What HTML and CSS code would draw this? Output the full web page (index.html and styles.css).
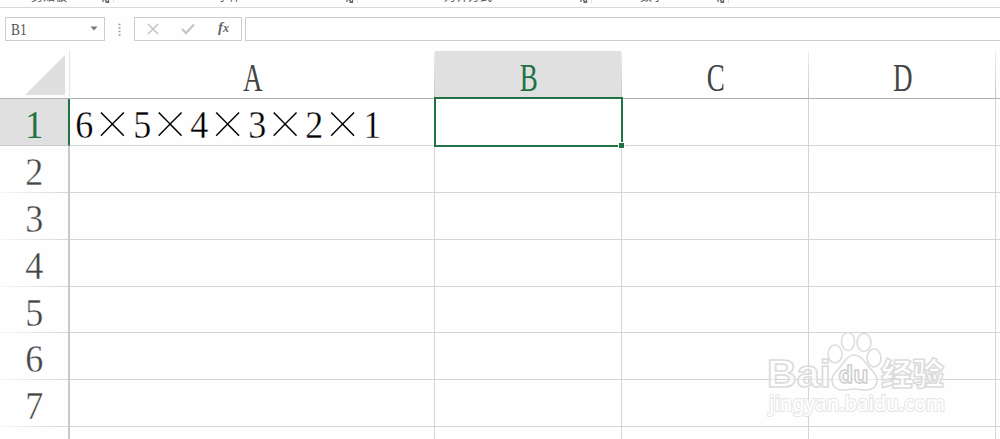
FILE: index.html
```html
<!DOCTYPE html>
<html lang="zh-CN">
<head>
<meta charset="utf-8">
<title>Excel</title>
<link rel="stylesheet" href="styles.css">
</head>
<body>
<div class="window">
  <div class="ribbon">
    <div class="group g1"><span>剪贴板</span><svg class="launcher" width="8" height="4"><path d="M1 0v2M3 0l3 2.400M6.500 0v2.500H3.500"/></svg></div>
    <div class="group g2"><span>字体</span><svg class="launcher" width="8" height="4"><path d="M1 0v2M3 0l3 2.400M6.500 0v2.500H3.500"/></svg></div>
    <div class="group g3"><span>对齐方式</span><svg class="launcher" width="8" height="4"><path d="M1 0v2M3 0l3 2.400M6.500 0v2.500H3.500"/></svg></div>
    <div class="group g4"><span>数字</span><svg class="launcher" width="8" height="4"><path d="M1 0v2M3 0l3 2.400M6.500 0v2.500H3.500"/></svg></div>
  </div>
  <div class="formula-bar">
    <div class="name-box"><span>B1</span><svg width="8" height="5"><path d="M.5 .5h7L4 4.500z" fill="#777"/></svg></div>
    <svg class="dots" width="3" height="14"><path d="M.5 1.500h2M.5 5h2M.5 8.500h2M.5 12h2" stroke="#999" stroke-width="1.300"/></svg>
    <div class="buttons">
      <svg width="12" height="12"><path d="M1 1l10 10M11 1l-10 10" stroke="#c6c6c6" stroke-width="1.700"/></svg>
      <svg width="14" height="12"><path d="M1 6l4 4 8-8.500" fill="none" stroke="#c6c6c6" stroke-width="2.400"/></svg>
      <span class="fx">f<small>x</small></span>
    </div>
    <div class="formula"></div>
  </div>
  <div class="sheet">
    <div class="corner"><svg width="40" height="40"><path d="M40 0v40H0z" fill="#dfdfdf"/></svg></div>
    <div class="col"><span>A</span></div><div class="col active"><span>B</span></div><div class="col"><span>C</span></div><div class="col"><span>D</span></div><div class="col"></div>
    <div class="row active"><span>1</span></div><div class="cell value"><span class="n">6</span><span class="x">×</span><span class="n">5</span><span class="x">×</span><span class="n">4</span><span class="x">×</span><span class="n">3</span><span class="x">×</span><span class="n">2</span><span class="x">×</span><span class="n">1</span></div><div class="cell selected"><i class="selection"></i><i class="handle"></i></div><div class="cell"></div><div class="cell"></div><div class="cell"></div>
    <div class="row"><span>2</span></div><div class="cell"></div><div class="cell"></div><div class="cell"></div><div class="cell"></div><div class="cell"></div>
    <div class="row"><span>3</span></div><div class="cell"></div><div class="cell"></div><div class="cell"></div><div class="cell"></div><div class="cell"></div>
    <div class="row"><span>4</span></div><div class="cell"></div><div class="cell"></div><div class="cell"></div><div class="cell"></div><div class="cell"></div>
    <div class="row"><span>5</span></div><div class="cell"></div><div class="cell"></div><div class="cell"></div><div class="cell"></div><div class="cell"></div>
    <div class="row"><span>6</span></div><div class="cell"></div><div class="cell"></div><div class="cell"></div><div class="cell"></div><div class="cell"></div>
    <div class="row"><span>7</span></div><div class="cell"></div><div class="cell"></div><div class="cell"></div><div class="cell"></div><div class="cell"></div>
    <div class="row"></div><div class="cell"></div><div class="cell"></div><div class="cell"></div><div class="cell"></div><div class="cell"></div>
  </div>
  <svg class="watermark" width="190" height="95" viewBox="0 0 190 95">
    <g class="mark">
      <text class="brand" x="4" y="57" font-size="39" textLength="64" lengthAdjust="spacingAndGlyphs">Bai</text>
      <text class="brand cjk" x="118" y="54.500" font-size="31" textLength="63" lengthAdjust="spacingAndGlyphs">经验</text>
      <ellipse cx="72" cy="24" rx="7" ry="9"/>
      <ellipse cx="85" cy="11.500" rx="6.500" ry="9"/>
      <ellipse cx="101" cy="12.500" rx="7" ry="9"/>
      <ellipse cx="111" cy="28" rx="7" ry="9"/>
      <path d="M91 25c7 0 10 6 14 11 4 5 9 8 9 14 0 7-5 10-11 10-5 0-8-1-12-1s-7 1-12 1c-6 0-10-4-10-10s5-9 9-14c4-5 7-11 13-11z"/>
      <text class="du" x="75.500" y="53" font-size="24" textLength="30" lengthAdjust="spacingAndGlyphs">du</text>
    </g>
    <text class="site" x="6" y="81" font-size="21" textLength="176" lengthAdjust="spacingAndGlyphs">jingyan.baidu.com</text>
  </svg>
</div>
</body>
</html>
```
FILE: styles.css
```css
* { box-sizing: border-box; }
body { margin: 0; background: #fefefe; }
.window { position: relative; width: 1000px; height: 439px; overflow: hidden; }

.ribbon { display: grid; grid-template-columns: 114px 244px 234px 137px; height: 8px; overflow: hidden; border-bottom: 1px solid #d9d9d9; }
.group { display: flex; align-items: flex-start; justify-content: space-between; height: 3px; overflow: hidden; border-right: 1px solid #e4e4e4; padding-right: 3px; font: 12px/14px "Noto Sans CJK SC", sans-serif; color: #555; }
.group span { margin-top: -11px; }
.g1 { padding-left: 31px; }
.g2 { padding-left: 103px; }
.g3 { padding-left: 86px; }
.g4 { padding-left: 48px; }
.launcher path { fill: none; stroke: #666; stroke-width: 1.3; }

.formula-bar { display: flex; height: 43px; padding: 9px 0 9px 5px; }
.name-box { display: flex; align-items: center; justify-content: space-between; width: 100px; height: 24px; padding: 0 6px 0 5px; border: 1px solid #cdcdcd; font: 16px "Liberation Serif", serif; color: #555; }
.name-box span { transform: scaleX(.84); transform-origin: left; padding-top: 2px; }
.name-box svg { margin-top: -1px; }
.dots { margin: 6px 13px 0 13px; }
.buttons { display: flex; align-items: center; width: 108px; height: 24px; padding-left: 12px; gap: 22px; border: 1px solid #cdcdcd; }
.fx { font: italic bold 15px/20px "Liberation Serif", serif; color: #666; margin-top: -3px; margin-left: 1px; }
.fx small { font-size: 12px; }
.formula { flex: 1; margin-left: 3px; height: 24px; border: 1px solid #cdcdcd; border-right: 0; }

.sheet { display: grid; grid-template-columns: 70px 365px 187px 187px 187px 60px; grid-template-rows: 48px 47px 47px 47px 47px 46px 47px 47px 47px; font: 41px/46px "Liberation Serif", serif; color: #444; }
.corner { display: flex; justify-content: flex-end; padding: 4px 4px 0 0; border-bottom: 1px solid #b1b1b1; border-right: 1px solid #e4e4e4; }
.col { text-align: center; padding-top: 3px; border-bottom: 1px solid #b1b1b1; background: linear-gradient(#f1f1f1, #c4c4c4) right / 1px 100% no-repeat; }
.col span { display: inline-block; transform: scaleX(.66); }
.col.active { background-color: #e0e0e0; color: #217346; }
.row { text-align: center; padding-top: 2px; border-right: 2px solid #c8c8c8; background: linear-gradient(90deg, #f7f7f7, #d6d6d6) bottom / 100% 1px no-repeat; }
.row span { display: inline-block; transform: scaleX(.88); -webkit-text-stroke: .4px #fefefe; }
.row.active { background: #e0e0e0; border-right-color: #217346; color: #217346; border-bottom: 1px solid #c9c9c9; }
.row.active span { -webkit-text-stroke: 0; }
.cell { border-right: 1px solid #d5d5d5; border-bottom: 1px solid #d5d5d5; }
.value { display: flex; padding: 2px 0 0 4px; color: #000; }
.n { width: 19.200px; text-align: center; transform: scaleX(.88); -webkit-text-stroke: .4px #fefefe; }
.x { width: 38.400px; display: flex; justify-content: center; font: 65px/46px "Liberation Serif", serif; -webkit-text-stroke: 1.8px #fefefe; }
.selected { position: relative; }
.selection { position: absolute; inset: -2px -2px -2px -1px; border: 2px solid #217346; }
.handle { position: absolute; right: -3px; bottom: -3px; width: 5px; height: 5px; background: #217346; outline: 1px solid #fff; }

.watermark { position: absolute; left: 763px; top: 330px; overflow: visible; }
.mark { fill: rgba(255, 255, 255, .55); stroke: #dcdcdc; stroke-width: 1.6; }
.brand { font-family: "Liberation Sans", sans-serif; font-weight: bold; }
.cjk { font-family: "Noto Sans CJK SC", sans-serif; font-weight: 900; }
.du { font-family: "Open Sans", sans-serif; font-weight: bold; stroke: #cfcfcf; }
.site { font-family: "Noto Sans", sans-serif; font-weight: 500; fill: #fff; stroke: #e5e5e5; stroke-width: 2; paint-order: stroke; }
```
